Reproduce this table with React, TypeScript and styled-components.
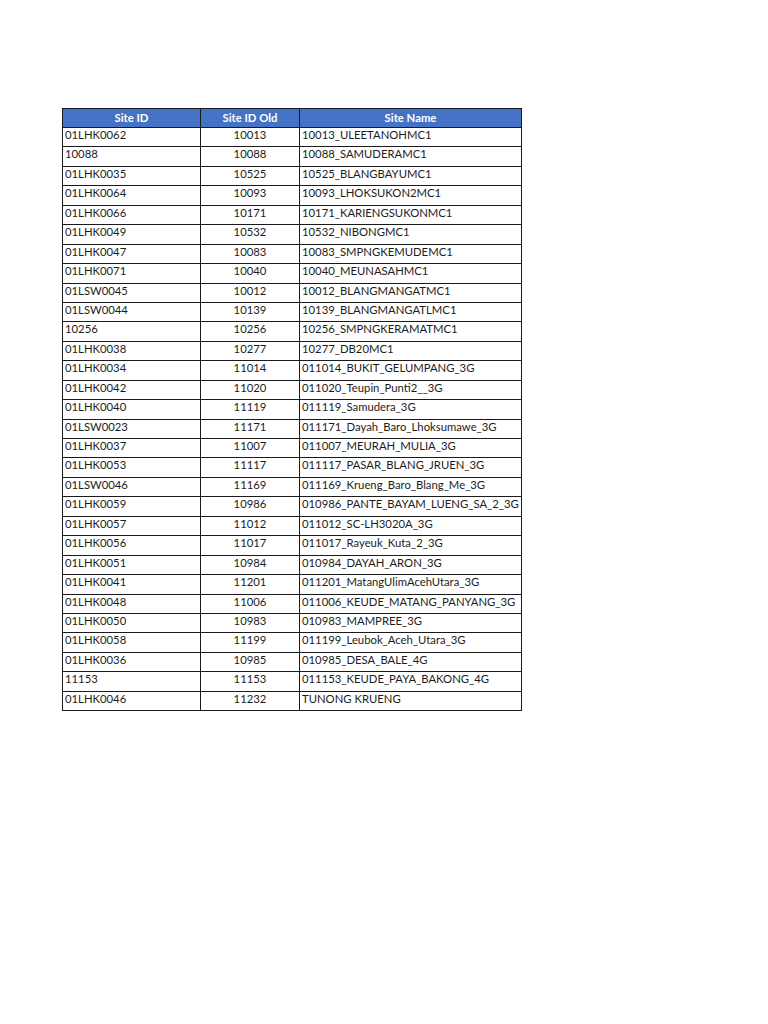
import styled, { createGlobalStyle } from 'styled-components'

const GlobalStyle = createGlobalStyle`
  html, body {
    margin: 0;
    padding: 0;
    background: #ffffff;
  }
  body {
    font-family: Lato, "Liberation Sans", sans-serif;
  }
`

const rows: [string, string, string][] = [
  ['01LHK0062', '10013', '10013_ULEETANOHMC1'],
  ['10088', '10088', '10088_SAMUDERAMC1'],
  ['01LHK0035', '10525', '10525_BLANGBAYUMC1'],
  ['01LHK0064', '10093', '10093_LHOKSUKON2MC1'],
  ['01LHK0066', '10171', '10171_KARIENGSUKONMC1'],
  ['01LHK0049', '10532', '10532_NIBONGMC1'],
  ['01LHK0047', '10083', '10083_SMPNGKEMUDEMC1'],
  ['01LHK0071', '10040', '10040_MEUNASAHMC1'],
  ['01LSW0045', '10012', '10012_BLANGMANGATMC1'],
  ['01LSW0044', '10139', '10139_BLANGMANGATLMC1'],
  ['10256', '10256', '10256_SMPNGKERAMATMC1'],
  ['01LHK0038', '10277', '10277_DB20MC1'],
  ['01LHK0034', '11014', '011014_BUKIT_GELUMPANG_3G'],
  ['01LHK0042', '11020', '011020_Teupin_Punti2__3G'],
  ['01LHK0040', '11119', '011119_Samudera_3G'],
  ['01LSW0023', '11171', '011171_Dayah_Baro_Lhoksumawe_3G'],
  ['01LHK0037', '11007', '011007_MEURAH_MULIA_3G'],
  ['01LHK0053', '11117', '011117_PASAR_BLANG_JRUEN_3G'],
  ['01LSW0046', '11169', '011169_Krueng_Baro_Blang_Me_3G'],
  ['01LHK0059', '10986', '010986_PANTE_BAYAM_LUENG_SA_2_3G'],
  ['01LHK0057', '11012', '011012_SC-LH3020A_3G'],
  ['01LHK0056', '11017', '011017_Rayeuk_Kuta_2_3G'],
  ['01LHK0051', '10984', '010984_DAYAH_ARON_3G'],
  ['01LHK0041', '11201', '011201_MatangUlimAcehUtara_3G'],
  ['01LHK0048', '11006', '011006_KEUDE_MATANG_PANYANG_3G'],
  ['01LHK0050', '10983', '010983_MAMPREE_3G'],
  ['01LHK0058', '11199', '011199_Leubok_Aceh_Utara_3G'],
  ['01LHK0036', '10985', '010985_DESA_BALE_4G'],
  ['11153', '11153', '011153_KEUDE_PAYA_BAKONG_4G'],
  ['01LHK0046', '11232', 'TUNONG KRUENG'],
]

const App = (): JSX.Element => {
  return (
    <Page>
      <GlobalStyle />
      <Sheet>
        <HeaderCell>Site ID</HeaderCell>
        <HeaderCell>Site ID Old</HeaderCell>
        <HeaderCell>Site Name</HeaderCell>
        {rows.map(([id, oldId, name]) => (
          <Row key={id + name}>
            <Cell>{id}</Cell>
            <Cell $center>{oldId}</Cell>
            <Cell>{name}</Cell>
          </Row>
        ))}
      </Sheet>
    </Page>
  )
}

const Page = styled.div`
  width: 768px;
  height: 1024px;
  padding: 108px 0 0 62px;
  box-sizing: border-box;
  background: #ffffff;
`
const Sheet = styled.div`
  display: grid;
  grid-template-columns: 138px 99px 222px;
  width: 460px;
  border-right: 1px solid #1a1a1a;
  border-bottom: 1px solid #1a1a1a;
  box-sizing: border-box;
`
const Row = styled.div`
  display: contents;
`
const HeaderCell = styled.div`
  height: 19px;
  background: #4472c4;
  color: #ffffff;
  font-size: 11.3px;
  font-weight: 700;
  text-align: center;
  line-height: 17px;
  border-left: 1px solid #1a1a1a;
  border-top: 1px solid #1a1a1a;
  box-sizing: border-box;
`
const Cell = styled.div<{ $center?: boolean }>`
  height: 19.45px;
  padding: 0 2px;
  color: #1c1c1c;
  font-size: 11.3px;
  line-height: 13px;
  text-align: ${p => (p.$center ? 'center' : 'left')};
  white-space: nowrap;
  overflow: hidden;
  border-left: 1px solid #1a1a1a;
  border-top: 1px solid #1a1a1a;
  box-sizing: border-box;
`

export default App
